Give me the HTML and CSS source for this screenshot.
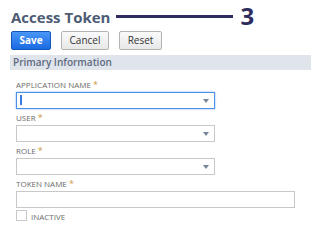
FILE: index.html
```html
<!DOCTYPE html>
<html lang="en">
<head>
    <meta charset="UTF-8">
    <title>Access Token</title>
    <link rel="stylesheet" href="styles.css">
</head>
<body>
    <div class="page">
        <div class="head">
            <h1 class="title">Access Token</h1>
            <span class="rule"></span>
            <span class="num">3</span>
        </div>

        <div class="actions">
            <button class="btn primary">Save</button>
            <button class="btn cancel">Cancel</button>
            <button class="btn reset">Reset</button>
        </div>

        <div class="section">Primary Information</div>

        <div class="fields">
            <div class="field">
                <label>Application Name <span class="req">*</span></label>
                <div class="select focus"><span class="caret"></span><span class="arrow"></span></div>
            </div>
            <div class="field">
                <label>User <span class="req">*</span></label>
                <div class="select"><span class="arrow"></span></div>
            </div>
            <div class="field">
                <label>Role <span class="req">*</span></label>
                <div class="select"><span class="arrow"></span></div>
            </div>
            <div class="field">
                <label>Token Name <span class="req">*</span></label>
                <div class="text-input"></div>
            </div>
            <div class="check">
                <span class="box"></span>
                <span class="check-label">Inactive</span>
            </div>
        </div>
    </div>
</body>
</html>
```

FILE: styles.css
```css
:root {
    --title: #4d5b74;
    --annot: #2e2b5f;
    --label: #6b6b6b;
    --req: #d09a45;
    --border: #c8c8c8;
    --font: 'Open Sans', 'Liberation Sans', Arial, sans-serif;
}

body {
    margin: 0;
    background: #fff;
    font-family: var(--font);
}

.page {
    padding-left: 10px;
}

.head {
    display: flex;
    align-items: center;
    height: 31px;
}

.title {
    margin: 0;
    font-size: 15px;
    font-weight: 700;
    color: var(--title);
    line-height: 20px;
    margin-top: 2px;
    padding-left: 1px;
}

.rule {
    width: 117px;
    height: 3px;
    background: var(--annot);
    margin-left: 6px;
    margin-top: 2px;
}

.num {
    font-size: 24px;
    font-weight: 700;
    color: var(--annot);
    margin-left: 7px;
    line-height: 24px;
}

.actions {
    display: flex;
    gap: 10px;
    padding-left: 1px;
}

.btn {
    height: 19px;
    padding: 0;
    font-family: var(--font);
    font-size: 10px;
    color: #333;
    background: linear-gradient(#fafafa, #e8e8e8);
    border: 1px solid #b3b3b3;
    border-radius: 2px;
    line-height: 17px;
    text-align: center;
}

.btn.primary {
    width: 40px;
    color: #fff;
    font-weight: 700;
    background: linear-gradient(#4a96f7, #1a6ae3);
    border-color: #1459b8;
}

.btn.cancel {
    width: 48px;
}

.btn.reset {
    width: 43px;
}

.section {
    margin-top: 5px;
    height: 15px;
    line-height: 15px;
    padding-left: 3px;
    background: #e0e4eb;
    color: #5d6b82;
    font-size: 10px;
    font-weight: 600;
}

.fields {
    padding: 10px 0 0 6px;
}

.field {
    margin-bottom: 4px;
}

.field label {
    display: block;
    height: 10px;
    line-height: 10px;
    margin-bottom: 2px;
    font-size: 8px;
    text-transform: uppercase;
    color: var(--label);
}

.req {
    color: var(--req);
    font-size: 9px;
}

.select {
    position: relative;
    box-sizing: border-box;
    width: 199px;
    height: 17px;
    border: 1px solid var(--border);
    background: #fff;
}

.select.focus {
    border-color: #4a8fe8;
    box-shadow: 0 0 2px #8ab8f0;
}

.caret {
    position: absolute;
    left: 3px;
    top: 2px;
    width: 2px;
    height: 10px;
    background: #3b7be0;
}

.arrow {
    position: absolute;
    right: 5px;
    top: 6px;
    width: 0;
    height: 0;
    border-left: 3px solid transparent;
    border-right: 3px solid transparent;
    border-top: 4px solid #76869a;
}

.text-input {
    box-sizing: border-box;
    width: 279px;
    height: 17px;
    border: 1px solid var(--border);
}

.check {
    display: flex;
    align-items: flex-end;
    margin-top: -2px;
}

.box {
    box-sizing: border-box;
    width: 11px;
    height: 11px;
    border: 1px solid var(--border);
}

.check-label {
    margin-left: 4px;
    font-size: 8px;
    line-height: 8px;
    text-transform: uppercase;
    color: var(--label);
}
```
